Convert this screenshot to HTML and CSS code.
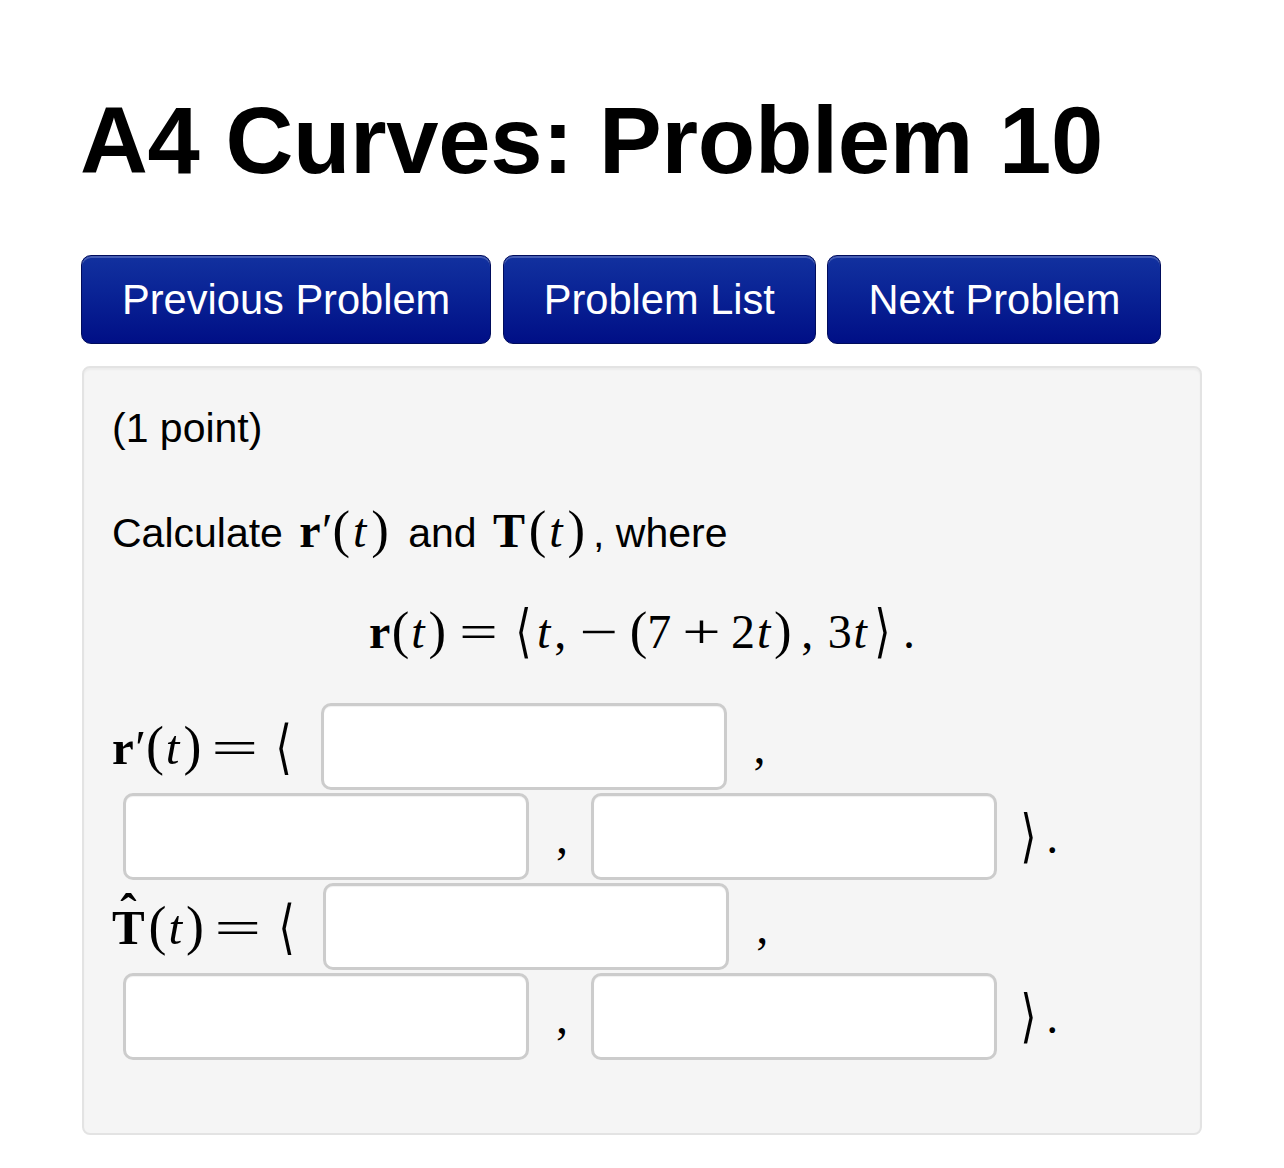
FILE: index.html
```html
<!DOCTYPE html>
<html lang="en">
<head>
<meta charset="utf-8">
<title>A4 Curves: Problem 10</title>
<link rel="stylesheet" href="styles.css">
</head>
<body>
<div class="page">
  <h1 class="title">A4 Curves: Problem 10</h1>
  <div class="nav">
    <a class="btn">Previous Problem</a>
    <a class="btn">Problem List</a>
    <a class="btn">Next Problem</a>
  </div>
  <div class="well">
    <p class="points">(1 point)</p>
    <p class="intro">Calculate <span class="m"><b>r</b>′<span class="p">(</span><i>t</i><span class="p">)</span></span> and <span class="m"><b class="bt">T</b><span class="p">(</span><i>t</i><span class="p">)</span></span>, where</p>
    <p class="display"><span class="m"><b>r</b><span class="p">(</span><i>t</i><span class="p">)</span><span class="rel">=</span><span class="ang">⟨</span><i>t</i><span class="cm">,</span><span class="neg">−</span><span class="p pl">(</span>7<span class="bin">+</span>2<i>t</i><span class="p">)</span><span class="cm2">,</span>3<i>t</i><span class="ang">⟩</span><span class="dot">.</span></span></p>
    <div class="answers">
      <div class="row">
        <span class="lbl m"><b>r</b>′<span class="p">(</span><i>t</i><span class="p">)</span><span class="rel">=</span><span class="ang">⟨</span></span>
        <span class="box first"></span>
        <span class="sep m">,</span>
      </div>
      <div class="row">
        <span class="box"></span>
        <span class="sep m">,</span>
        <span class="box"></span>
        <span class="end m"><span class="ang">⟩</span><span class="dot">.</span></span>
      </div>
      <div class="row">
        <span class="lbl m"><b class="hat bt">T</b><span class="p">(</span><i>t</i><span class="p">)</span><span class="rel">=</span><span class="ang">⟨</span></span>
        <span class="box first"></span>
        <span class="sep m">,</span>
      </div>
      <div class="row">
        <span class="box"></span>
        <span class="sep m">,</span>
        <span class="box"></span>
        <span class="end m"><span class="ang">⟩</span><span class="dot">.</span></span>
      </div>
    </div>
  </div>
</div>
</body>
</html>
```

FILE: styles.css
```css
html, body {
  margin: 0;
  padding: 0;
  background: #ffffff;
}

body {
  font-family: "Liberation Sans", Arial, Helvetica, sans-serif;
  color: #000;
}

.page {
  padding: 89px 0 0 80px;
  width: 1122px;
}

.title {
  margin: 0;
  font-size: 94px;
  line-height: 103px;
  font-weight: bold;
  letter-spacing: -0.3px;
}

.nav {
  display: flex;
  gap: 11.5px;
  margin-top: 63px;
  padding-left: 1px;
}

.btn {
  box-sizing: border-box;
  height: 89px;
  padding: 0 40px;
  display: flex;
  align-items: center;
  font-size: 41.6px;
  color: #fff;
  border-radius: 10px;
  border: 1px solid #000c5c;
  background: linear-gradient(to bottom, #12319f 0%, #0a2496 40%, #000f86 100%);
  box-shadow: inset 0 2px 0 rgba(255, 255, 255, 0.22);
  cursor: pointer;
}

.well {
  box-sizing: border-box;
  margin-top: 22px;
  margin-left: 2px;
  width: 1120px;
  background: #f5f5f5;
  border: 2px solid #e3e3e3;
  border-radius: 8px;
  box-shadow: inset 0 2px 2px rgba(0, 0, 0, 0.04);
  padding: 36px 28px 73px 28px;
  font-size: 41px;
  line-height: 49px;
}

.well p {
  margin: 0;
}

.intro {
  margin-top: 52px !important;
}

.intro .m {
  margin: 0 8px 0 5px;
}

.intro .m i {
  margin: 0 0.1em 0 0.06em;
}

/* math */
.m {
  font-family: "Liberation Serif", "DejaVu Serif", "Times New Roman", serif;
  font-size: 48px;
  white-space: nowrap;
}

.m b {
  font-weight: bold;
  margin-right: 0.03em;
}

.m b.bt {
  margin-right: 0.08em;
}

.m i {
  font-style: italic;
  margin: 0 0.08em 0 0.04em;
}

.p {
  font-size: 1.1em;
}

.rel,
.bin,
.neg {
  display: inline-block;
  transform: scaleX(1.42);
}

.rel {
  margin: 0 0.4em;
}

.bin {
  margin: 0 0.34em;
}

.neg {
  margin: 0 0.36em 0 0.1em;
}

.cm {
  margin-right: 0.3em;
}

.cm2 {
  margin: 0 0.3em 0 0.2em;
}

.ang {
  display: inline-block;
  font-family: "DejaVu Sans", sans-serif;
  transform: scale(0.85, 1.2);
  font-weight: normal;
  margin: 0 0.05em;
}

.dot {
  margin-left: 0.18em;
}

.display {
  text-align: center;
  margin-top: 42px !important;
  line-height: 60px;
}

/* answer rows */
.answers {
  margin-top: 39px;
  display: flex;
  flex-direction: column;
  gap: 3px;
}

.row {
  display: flex;
  align-items: center;
  height: 87px;
}

.lbl {
  line-height: 60px;
  font-size: 49px;
}

.lbl .rel {
  transform: scaleX(1.7);
  margin: 0 0.44em 0 0.4em;
}

.lbl .ang {
  margin-left: 0.08em;
}

.box {
  box-sizing: border-box;
  display: block;
  width: 406px;
  height: 87px;
  background: #fff;
  border: 3px solid #cccccc;
  border-radius: 10px;
  margin-left: 11px;
  box-shadow: inset 0 1px 1px rgba(0, 0, 0, 0.06);
}

.box.first {
  margin-left: 25px;
}

.sep {
  width: 8px;
  margin: 0 27px 0 27px;
  line-height: 60px;
}

.sep + .box {
  margin-left: 0;
}

.end {
  margin-left: 20px;
  line-height: 60px;
}

.end .dot {
  margin-left: 0.12em;
}

.hat {
  position: relative;
  display: inline-block;
}

.hat::before {
  content: "ˆ";
  position: absolute;
  left: 0;
  right: 0;
  top: -0.32em;
  text-align: center;
  font-weight: bold;
}
```
